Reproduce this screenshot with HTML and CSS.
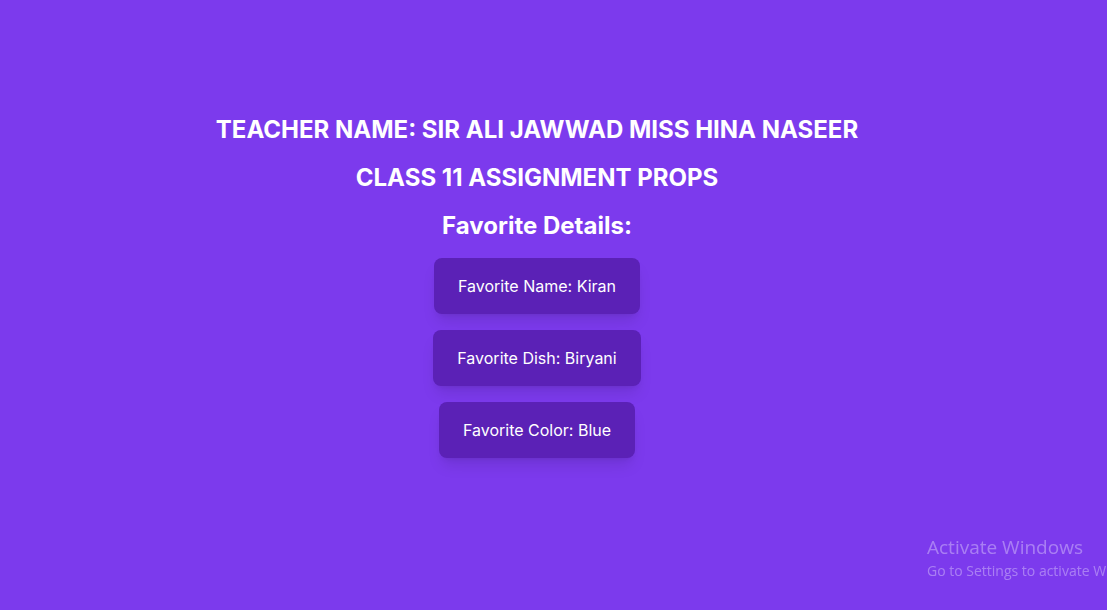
FILE: index.html
```html
<!DOCTYPE html>
<html lang="en">
<head>
<meta charset="utf-8">
<title>Props Assignment</title>
<link rel="stylesheet" href="styles.css">
</head>
<body>
<main class="page">
  <h1 class="heading">TEACHER NAME: SIR ALI JAWWAD MISS HINA NASEER</h1>
  <h1 class="heading">CLASS 11 ASSIGNMENT PROPS</h1>
  <h2 class="heading">Favorite Details:</h2>
  <div class="cards">
    <div class="card">Favorite Name: Kiran</div>
    <div class="card">Favorite Dish: Biryani</div>
    <div class="card">Favorite Color: Blue</div>
  </div>
</main>
<div class="watermark">
  <div class="wm-title">Activate Windows</div>
  <div class="wm-sub">Go to Settings to activate Windows.</div>
</div>
</body>
</html>
```
FILE: styles.css
```css
html, body {
  margin: 0;
  padding: 0;
  height: 100%;
}
body {
  background: #7c3aed;
  font-family: Inter, "Noto Sans", sans-serif;
  color: #ffffff;
  overflow: hidden;
}
.page {
  display: flex;
  flex-direction: column;
  align-items: center;
  gap: 16px;
  padding-top: 114px;
  padding-right: 33px;
}
.heading {
  margin: 0;
  font-size: 24px;
  line-height: 32px;
  font-weight: 700;
}
.cards {
  display: flex;
  flex-direction: column;
  align-items: center;
  gap: 16px;
}
.card {
  background: #5b21b6;
  border-radius: 8px;
  padding: 16px 24px;
  font-size: 16px;
  line-height: 24px;
  box-shadow: 0 10px 15px -3px rgba(0,0,0,0.1), 0 4px 6px -4px rgba(0,0,0,0.1);
}
.watermark {
  position: fixed;
  left: 927px;
  top: 535px;
  white-space: nowrap;
  font-family: "Open Sans", "Noto Sans", sans-serif;
  color: rgba(255,255,255,0.35);
}
.wm-title {
  font-size: 19px;
  line-height: 25px;
}
.wm-sub {
  font-size: 14px;
  line-height: 21px;
}
```
